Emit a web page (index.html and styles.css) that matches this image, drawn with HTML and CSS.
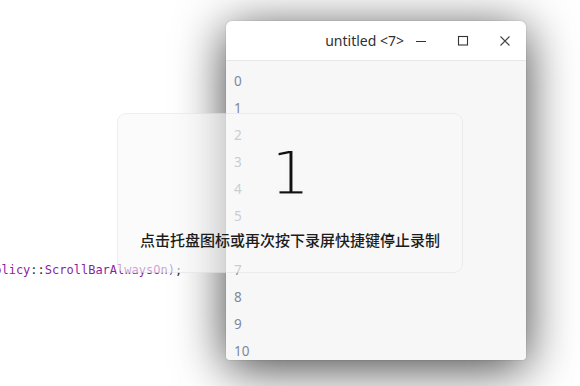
FILE: index.html
```html
<!DOCTYPE html>
<html>
<head>
<meta charset="utf-8">
<link rel="stylesheet" href="styles.css">
</head>
<body>
<div class="desktop">
  <div class="code-line"><span class="enum">Policy</span><span class="punct">::</span><span class="enum">ScrollBarAlwaysOn</span><span class="paren">)</span><span class="punct">;</span></div>

  <div class="window">
    <div class="titlebar">
      <span class="title">untitled &lt;7&gt;</span>
      <div class="buttons">
        <span class="btn">
          <svg width="12" height="12" viewBox="0 0 12 12"><path d="M1 6.5H11" stroke="#333" stroke-width="1.1" fill="none"/></svg>
        </span>
        <span class="btn">
          <svg width="12" height="12" viewBox="0 0 12 12"><rect x="1.5" y="1.5" width="9" height="8.5" stroke="#333" stroke-width="1.1" fill="none"/></svg>
        </span>
        <span class="btn">
          <svg width="12" height="12" viewBox="0 0 12 12"><path d="M1.5 1.5L10.5 10.5M10.5 1.5L1.5 10.5" stroke="#444" stroke-width="1.1" fill="none"/></svg>
        </span>
      </div>
    </div>
    <div class="content">
      <div class="gutter">
        <div>0</div><div>1</div><div>2</div><div>3</div><div>4</div><div>5</div><div>6</div><div>7</div><div>8</div><div>9</div><div>10</div>
      </div>
    </div>
  </div>

  <div class="overlay">
    <div class="count">1</div>
    <div class="hint">点击托盘图标或再次按下录屏快捷键停止录制</div>
  </div>
</div>
</body>
</html>
```

FILE: styles.css
```css
html, body {
  margin: 0;
  padding: 0;
  background: #ffffff;
}

.desktop {
  position: relative;
  width: 580px;
  height: 386px;
  overflow: hidden;
  background: #ffffff;
}

.code-line {
  position: absolute;
  left: -13px;
  top: 261px;
  font-family: "DejaVu Sans Mono", monospace;
  font-size: 12px;
  line-height: 18px;
  white-space: pre;
}
.code-line .enum { color: #8a1f9e; }
.code-line .punct { color: #2a2a2a; }
.code-line .paren { color: #5b3cb3; }

.window {
  position: absolute;
  left: 226px;
  top: 21px;
  width: 300px;
  height: 339px;
  border-radius: 6px 6px 4px 4px;
  background: #f7f7f7;
  box-shadow: 0 8px 50px rgba(0, 0, 0, 0.75), 0 0 1px rgba(0, 0, 0, 0.5);
  display: flex;
  flex-direction: column;
  overflow: hidden;
}

.titlebar {
  height: 40px;
  flex: none;
  background: #ffffff;
  border-bottom: 1px solid #e8e8e8;
  display: flex;
  align-items: center;
  justify-content: flex-end;
  box-sizing: border-box;
}

.title {
  font-family: "Noto Sans", sans-serif;
  font-size: 14px;
  color: #303030;
  margin-right: -4px;
}

.buttons {
  display: flex;
}

.btn {
  width: 42px;
  height: 40px;
  display: flex;
  align-items: center;
  justify-content: center;
}

.content {
  flex: 1;
  background: #f7f7f7;
  padding: 7px 0 0 8px;
}

.gutter {
  font-family: "Noto Sans", sans-serif;
  font-size: 13.5px;
  line-height: 27px;
  color: #7f899c;
}

.overlay {
  position: absolute;
  left: 117px;
  top: 113px;
  width: 346px;
  height: 160px;
  box-sizing: border-box;
  border: 1px solid rgba(0, 0, 0, 0.05);
  border-radius: 9px;
  background: rgba(248, 248, 248, 0.6);
  display: flex;
  flex-direction: column;
  align-items: center;
  padding-top: 29px;
}

.count {
  font-family: "DejaVu Sans", sans-serif;
  font-weight: 400;
  font-size: 62px;
  line-height: 62px;
  color: #111;
  -webkit-text-stroke: 3px #f7f7f7;
}

.hint {
  margin-top: 25px;
  font-family: "Noto Sans CJK SC", sans-serif;
  font-weight: 500;
  font-size: 15px;
  line-height: 20px;
  color: #1c1c1c;
}
```
